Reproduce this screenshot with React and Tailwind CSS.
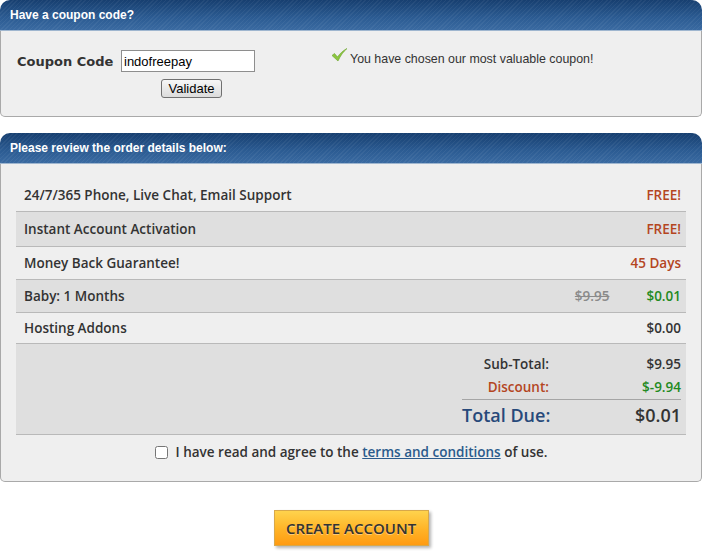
import React, { useState } from 'react';

const headerBg =
  'bg-[image:repeating-linear-gradient(135deg,rgba(255,255,255,0.05)_0px,rgba(255,255,255,0.05)_1px,transparent_1px,transparent_3px),linear-gradient(to_bottom,#173f70,#2c5c93_60%,#3a6aa1)]';

const PanelHeader = ({ title }) => (
  <div
    className={`${headerBg} h-[31px] rounded-t-[10px] flex items-center pl-[10px] text-white font-bold text-[12px] border-b border-[#9fb6cf]`}
    style={{ fontFamily: '"Liberation Sans", Arial, sans-serif' }}
  >
    {title}
  </div>
);

const CheckMark = () => (
  <svg width="17" height="14" viewBox="0 0 17 14">
    <path
      d="M1 7.5 L3.5 5.5 L6.5 9 C9 5.5 12 2.5 16 0.5 C12.5 3.5 9.5 7.5 7 13 Z"
      fill="#8cc63f"
      stroke="#6aa52a"
      strokeWidth="0.6"
      strokeLinejoin="round"
    />
  </svg>
);

const rows = [
  { label: '24/7/365 Phone, Live Chat, Email Support', value: 'FREE!', tone: 'red', h: 'h-[32px]', bg: 'bg-[#efefef]' },
  { label: 'Instant Account Activation', value: 'FREE!', tone: 'red', h: 'h-[35px]', bg: 'bg-[#dfdfdf]' },
  { label: 'Money Back Guarantee!', value: '45 Days', tone: 'red', h: 'h-[33px]', bg: 'bg-[#efefef]' },
  { label: 'Baby: 1 Months', value: '$0.01', old: '$9.95', tone: 'green', h: 'h-[33px]', bg: 'bg-[#dfdfdf]' },
  { label: 'Hosting Addons', value: '$0.00', tone: 'dark', h: 'h-[31px]', bg: 'bg-[#efefef]' },
];

const toneClass = {
  red: 'text-[#b4461f]',
  green: 'text-[#1f8a22]',
  dark: 'text-[#333333]',
};

export default function App() {
  const [code, setCode] = useState('indofreepay');
  const [agree, setAgree] = useState(false);

  return (
    <div className="w-[703px] bg-white pr-[1px]" style={{ fontFamily: '"Open Sans", "DejaVu Sans", sans-serif' }}>
      {/* Coupon panel */}
      <div>
        <PanelHeader title="Have a coupon code?" />
        <div className="h-[86px] bg-[#efefef] border border-t-0 border-[#a9a9a9] rounded-b-[5px] flex">
          <div className="pt-[19px] pl-[16px]">
            <div className="flex items-center">
              <span
                className="text-[13px] font-bold text-[#333] w-[104px] pt-[2px]"
                style={{ fontFamily: '"DejaVu Sans", Verdana, sans-serif' }}
              >
                Coupon Code
              </span>
              <input
                value={code}
                onChange={(e) => setCode(e.target.value)}
                className="w-[134px] h-[22px] bg-white border border-[#8e8e8e] px-[2px] text-[13px] text-black outline-none"
                style={{ fontFamily: '"Liberation Sans", Arial, sans-serif' }}
              />
            </div>
            <div className="pl-[144px] mt-[3px]">
              <button
                className="h-[19px] w-[61px] border border-[#707070] rounded-[3px] bg-[image:linear-gradient(to_bottom,#f6f6f6,#dcdcdc)] text-[13px] text-black leading-none"
                style={{ fontFamily: '"Liberation Sans", Arial, sans-serif' }}
              >
                Validate
              </button>
            </div>
          </div>
          <div
            className="ml-[76px] pt-[19px] flex items-start text-[12.4px] text-[#333]"
            style={{ fontFamily: '"Liberation Sans", Arial, sans-serif' }}
          >
            <span className="mr-[2px] -mt-[2px]"><CheckMark /></span>
            <span>You have chosen our most valuable coupon!</span>
          </div>
        </div>
      </div>

      {/* Order panel */}
      <div className="mt-[16px]">
        <PanelHeader title="Please review the order details below:" />
        <div className="bg-[#efefef] border border-t-0 border-[#a9a9a9] rounded-b-[5px] pt-[16px] px-[15px]">
          <div className="text-[13.5px] font-semibold text-[#333]">
            {rows.map((r) => (
              <div key={r.label} className={`${r.h} ${r.bg} border-b border-[#b9b9b9] flex items-center pl-[8px] pr-[5px]`}>
                <span className="flex-1">{r.label}</span>
                {r.old && <span className="text-[#8a8a8a] line-through mr-[37px]">{r.old}</span>}
                <span className={toneClass[r.tone]}>{r.value}</span>
              </div>
            ))}
            <div className="h-[91px] bg-[#dfdfdf] border-b border-[#b9b9b9] flex justify-end pr-[5px] pt-[8px]">
              <div className="w-[219px]">
                <div className="flex h-[24px] items-center">
                  <span className="w-[87px] text-right">Sub-Total:</span>
                  <span className="flex-1 text-right">$9.95</span>
                </div>
                <div className="flex h-[24px] items-center border-b border-[#a5a5a5]">
                  <span className="w-[87px] text-right text-[#b4461f]">Discount:</span>
                  <span className="flex-1 text-right text-[#1f8a22]">$-9.94</span>
                </div>
                <div className="flex h-[31px] items-center text-[18px]">
                  <span className="w-[87px] text-right text-[#27497a] whitespace-nowrap">Total Due:</span>
                  <span className="flex-1 text-right">$0.01</span>
                </div>
              </div>
            </div>
            <div className="h-[46px] pb-[12px] flex items-center justify-center">
              <input
                type="checkbox"
                checked={agree}
                onChange={(e) => setAgree(e.target.checked)}
                className="w-[13px] h-[13px] mr-[8px] accent-[#888]"
              />
              <span>
                I have read and agree to the{' '}
                <a href="#" className="text-[#2b5b8c] underline">terms and conditions</a>{' '}
                of use.
              </span>
            </div>
          </div>
        </div>
      </div>

      {/* Create account */}
      <div className="flex justify-center pt-[28px] pb-[8px]">
        <button className="w-[155px] h-[36px] border border-[#d8a84a] bg-[image:linear-gradient(to_bottom,#ffd34d,#ffb326_55%,#ff9b12)] shadow-[2px_2px_3px_rgba(0,0,0,0.3)] text-[15px] font-semibold text-[#333] [text-shadow:0_1px_0_rgba(255,255,255,0.4)]">
          CREATE ACCOUNT
        </button>
      </div>
    </div>
  );
}
